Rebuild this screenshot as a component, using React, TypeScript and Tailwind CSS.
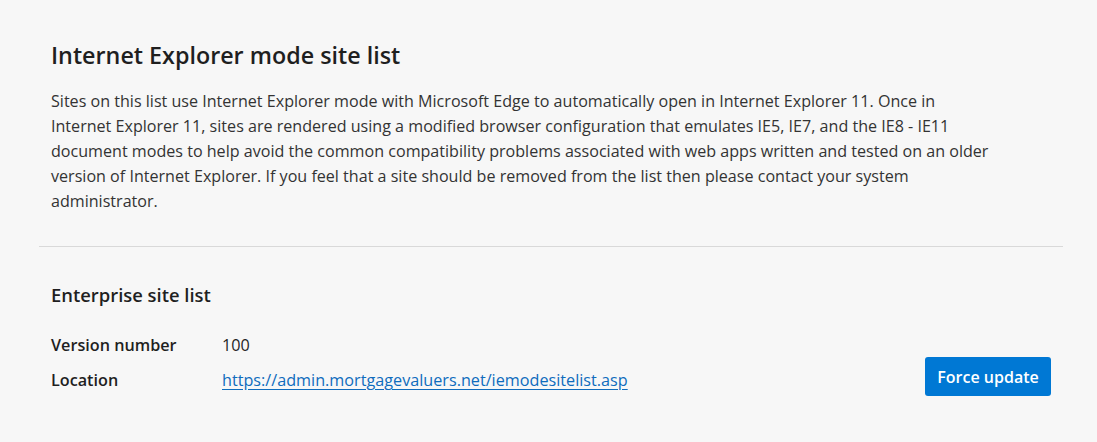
export default function App() {
  return (
    <div className="min-h-[442px] w-full bg-[#f7f7f7] pl-[39px] pr-[34px] pt-[39px] text-[#1f1f1f]" style={{ fontFamily: '"Open Sans", "Noto Sans", sans-serif' }}>
      <section className="px-3 pb-[32px]">
        <h1 className="text-[23.3px] font-semibold leading-[32px]">Internet Explorer mode site list</h1>
        <p className="mt-[18px] whitespace-nowrap text-[16.1px] leading-[25px] text-[#333]">
          Sites on this list use Internet Explorer mode with Microsoft Edge to automatically open in Internet Explorer 11. Once in
          <br />
          Internet Explorer 11, sites are rendered using a modified browser configuration that emulates IE5, IE7, and the IE8 - IE11
          <br />
          document modes to help avoid the common compatibility problems associated with web apps written and tested on an older
          <br />
          version of Internet Explorer. If you feel that a site should be removed from the list then please contact your system
          <br />
          administrator.
        </p>
      </section>
      <hr className="border-t border-[#d9d9d9]" />
      <section className="px-3 pt-[35px]">
        <h2 className="text-[18.4px] font-semibold leading-[26px]">Enterprise site list</h2>
        <div className="mt-[25px] flex items-end justify-between">
          <dl className="grid grid-cols-[171px_auto] gap-y-[11px] text-[16.2px] leading-[24px]">
            <dt className="font-semibold">Version number</dt>
            <dd>100</dd>
            <dt className="font-semibold">Location</dt>
            <dd>
              <a href="#" className="text-[#0f6cbd] underline decoration-[#0f6cbd] underline-offset-[3px]">https://admin.mortgagevaluers.net/iemodesitelist.asp</a>
            </dd>
          </dl>
          <button className="mb-[-4px] h-[39px] w-[126px] rounded-[3px] bg-[#0078d4] text-[16px] font-semibold text-white">Force update</button>
        </div>
      </section>
    </div>
  );
}
